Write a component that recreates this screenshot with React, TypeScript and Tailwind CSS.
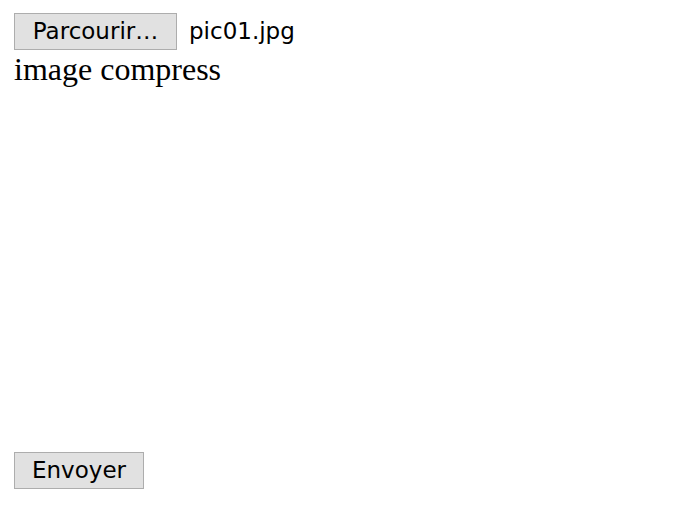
import React from 'react';

const btn =
    "border border-[#adadad] bg-[#e1e1e1] text-black text-[23px] leading-none flex items-center justify-center font-['DejaVu_Sans',sans-serif]";

function App() {
    return (
        <div className="min-h-[511px] bg-white pl-[14px] pt-[13px]">
            <div className="flex items-center h-[37px]">
                <button className={`${btn} w-[163px] h-[37px]`}>Parcourir…</button>
                <span className="ml-[12px] text-[23px] text-black font-['DejaVu_Sans',sans-serif]">pic01.jpg</span>
            </div>
            <div className="h-[402px] text-[32px] leading-[38px] text-black font-['Liberation_Serif',serif]">
                image compress
            </div>
            <button className={`${btn} w-[130px] h-[37px]`}>Envoyer</button>
        </div>
    );
}

export default App;
